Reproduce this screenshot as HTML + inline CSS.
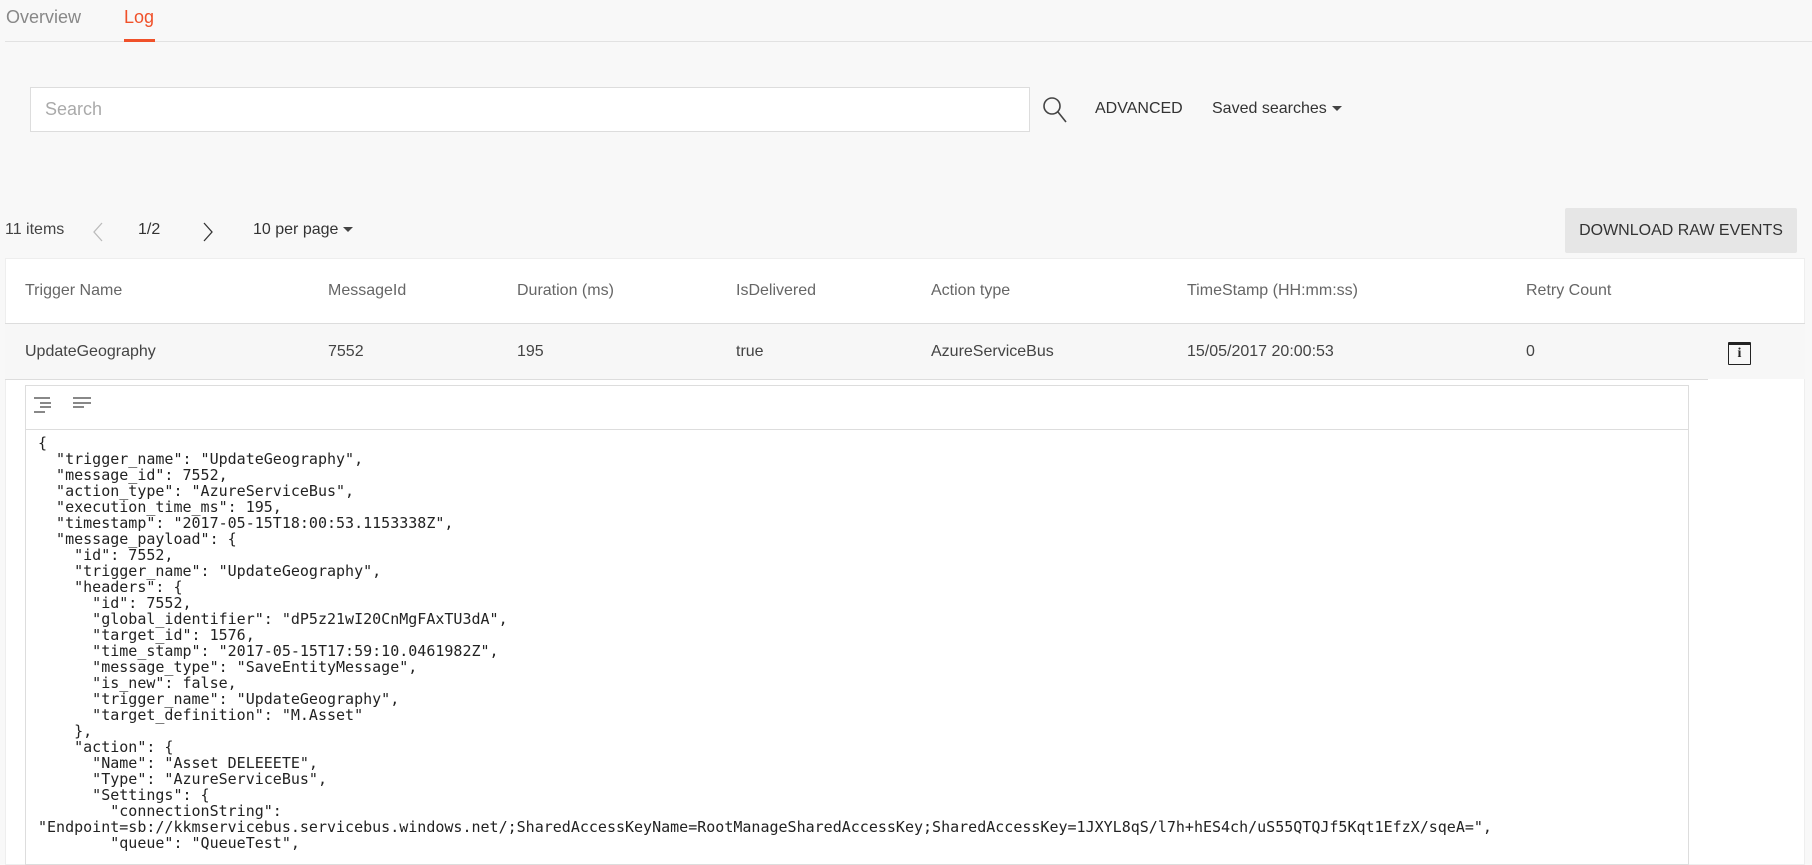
<!DOCTYPE html>
<html style="overflow:hidden;height:865px"><head><meta charset="utf-8"><style>
*{box-sizing:border-box;margin:0;padding:0}
body{width:1812px;height:865px;overflow:hidden;background:#f8f8f8;font-family:"Liberation Sans",sans-serif;color:#444;position:relative}
.a{position:absolute;white-space:nowrap}
.code{position:absolute;left:38px;top:435px;font-family:"DejaVu Sans Mono","Liberation Mono",monospace;font-size:15px;line-height:16px;color:#222;white-space:pre}
.caret{display:inline-block;width:0;height:0;border-left:5px solid transparent;border-right:5px solid transparent;border-top:5px solid #444;vertical-align:middle;margin-left:5px}
</style></head><body>
<div class="a" style="left:6px;top:7px;font-size:18px;color:#888">Overview</div>
<div class="a" style="left:124px;top:7px;font-size:18px;color:#f0512a">Log</div>
<div class="a" style="left:5px;top:41px;width:1807px;height:1px;background:#e2e2e2"></div>
<div class="a" style="left:124px;top:39px;width:31px;height:3px;background:#f0512a"></div>

<div class="a" style="left:30px;top:87px;width:1000px;height:45px;background:#fff;border:1px solid #ddd"></div>
<div class="a" style="left:45px;top:99px;font-size:18px;color:#aaa">Search</div>
<svg class="a" style="left:1042px;top:96px" width="26" height="28" viewBox="0 0 26 28"><circle cx="10" cy="10" r="8" fill="none" stroke="#444" stroke-width="1.6"/><line x1="16" y1="16" x2="24" y2="26" stroke="#444" stroke-width="1.6"/></svg>
<div class="a" style="left:1095px;top:100px;font-size:16px;color:#333">ADVANCED</div>
<div class="a" style="left:1212px;top:100px;font-size:16px;color:#333">Saved searches<span class="caret"></span></div>

<div class="a" style="left:5px;top:221px;font-size:16px;color:#444">11 items</div>
<svg class="a" style="left:92px;top:222px" width="12" height="20"><polyline points="10,1 2,10 10,19" fill="none" stroke="#bbb" stroke-width="1.3"/></svg>
<div class="a" style="left:138px;top:221px;font-size:16px;color:#333">1/2</div>
<svg class="a" style="left:202px;top:222px" width="12" height="20"><polyline points="2,1 10,10 2,19" fill="none" stroke="#333" stroke-width="1.3"/></svg>
<div class="a" style="left:253px;top:221px;font-size:16px;color:#333">10 per page<span class="caret"></span></div>
<div class="a" style="left:1565px;top:208px;width:232px;height:45px;background:#e6e6e6;border-radius:2px;font-size:16px;color:#333;text-align:center;line-height:45px">DOWNLOAD RAW EVENTS</div>

<div class="a" style="left:5px;top:258px;width:1800px;height:607px;background:#fff;border:1px solid #eee"></div>
<div class="a" style="left:5px;top:323px;width:1800px;height:1px;background:#ddd"></div>
<div class="a" style="left:5px;top:324px;width:1800px;height:55px;background:#f7f7f7"></div>
<div class="a" style="left:5px;top:379px;width:1703px;height:1px;background:#ddd"></div>
<div style="font-size:16px;color:#666">
<div class="a" style="left:25px;top:282px">Trigger Name</div>
<div class="a" style="left:328px;top:282px">MessageId</div>
<div class="a" style="left:517px;top:282px">Duration (ms)</div>
<div class="a" style="left:736px;top:282px">IsDelivered</div>
<div class="a" style="left:931px;top:282px">Action type</div>
<div class="a" style="left:1187px;top:282px">TimeStamp (HH:mm:ss)</div>
<div class="a" style="left:1526px;top:282px">Retry Count</div>
</div>
<div style="font-size:16px;color:#444">
<div class="a" style="left:25px;top:343px">UpdateGeography</div>
<div class="a" style="left:328px;top:343px">7552</div>
<div class="a" style="left:517px;top:343px">195</div>
<div class="a" style="left:736px;top:343px">true</div>
<div class="a" style="left:931px;top:343px">AzureServiceBus</div>
<div class="a" style="left:1187px;top:343px">15/05/2017 20:00:53</div>
<div class="a" style="left:1526px;top:343px">0</div>
</div>
<div class="a" style="left:1728px;top:342px;width:23px;height:23px;border:1.5px solid #222;border-top-width:3px;border-radius:1px;font-family:'Liberation Serif',serif;font-size:14px;font-weight:bold;text-align:center;line-height:18px;color:#222">i</div>

<div class="a" style="left:25px;top:385px;width:1664px;height:480px;background:#fff;border:1px solid #ddd"></div>
<div class="a" style="left:26px;top:429px;width:1662px;height:1px;background:#ddd"></div>
<svg class="a" style="left:34px;top:396px" width="20" height="18"><g stroke="#888" stroke-width="2"><line x1="0" y1="2" x2="16" y2="2"/><line x1="6" y1="7" x2="17" y2="7"/><line x1="6" y1="11" x2="17" y2="11"/><line x1="0" y1="16" x2="11" y2="16"/></g></svg>
<svg class="a" style="left:73px;top:396px" width="20" height="14"><g stroke="#888" stroke-width="2"><line x1="0" y1="2" x2="18" y2="2"/><line x1="0" y1="7" x2="18" y2="7"/><line x1="0" y1="11" x2="11" y2="11"/></g></svg>
<div class="code">{
  "trigger_name": "UpdateGeography",
  "message_id": 7552,
  "action_type": "AzureServiceBus",
  "execution_time_ms": 195,
  "timestamp": "2017-05-15T18:00:53.1153338Z",
  "message_payload": {
    "id": 7552,
    "trigger_name": "UpdateGeography",
    "headers": {
      "id": 7552,
      "global_identifier": "dP5z21wI20CnMgFAxTU3dA",
      "target_id": 1576,
      "time_stamp": "2017-05-15T17:59:10.0461982Z",
      "message_type": "SaveEntityMessage",
      "is_new": false,
      "trigger_name": "UpdateGeography",
      "target_definition": "M.Asset"
    },
    "action": {
      "Name": "Asset DELEEETE",
      "Type": "AzureServiceBus",
      "Settings": {
        "connectionString":
"Endpoint=sb://kkmservicebus.servicebus.windows.net/;SharedAccessKeyName=RootManageSharedAccessKey;SharedAccessKey=1JXYL8qS/l7h+hES4ch/uS55QTQJf5Kqt1EfzX/sqeA=",
        "queue": "QueueTest",</div>
</body></html>
